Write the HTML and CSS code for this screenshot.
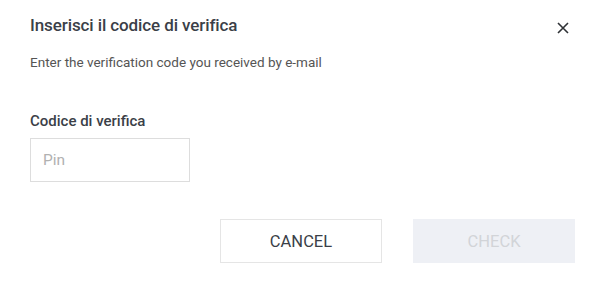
FILE: index.html
```html
<!DOCTYPE html>
<html>
<head>
<meta charset="UTF-8">
<title>Inserisci il codice di verifica</title>
<link rel="stylesheet" href="styles.css">
</head>
<body>
<div class="dialog">
	<div class="dialog_head">
		<h2 class="dialog_title">Inserisci il codice di verifica</h2>
		<a class="dialog_close" href="#">
			<svg width="12" height="12" viewBox="0 0 12 12"><path d="M1 1L11 11M11 1L1 11" stroke="#2f3236" stroke-width="1.6" fill="none"/></svg>
		</a>
	</div>
	<p class="dialog_desc">Enter the verification code you received by e-mail</p>
	<div class="field">
		<label class="field_label" for="pin">Codice di verifica</label>
		<input class="field_input" id="pin" type="text" placeholder="Pin">
	</div>
	<div class="dialog_btns">
		<button class="btn btn_cancel">CANCEL</button>
		<button class="btn btn_check" disabled>CHECK</button>
	</div>
</div>
</body>
</html>
```

FILE: styles.css
```css
*{margin:0;padding:0;outline:0;box-sizing:border-box;}
body{background:#fff;color:#3b3f48;font-family:Roboto,"Liberation Sans",sans-serif;}
.dialog{width:600px;height:290px;padding:10px 25px 0 30px;}
.dialog_head{display:flex;justify-content:space-between;align-items:center;height:30px;}
.dialog_title{font-size:17px;font-weight:500;color:#3b3f48;letter-spacing:-0.1px;}
.dialog_close{display:flex;width:20px;height:20px;align-items:center;justify-content:center;margin-right:2px;margin-top:6px;}
.dialog_desc{margin-top:14px;font-size:13.5px;color:#555;line-height:16px;}
.field{margin-top:42px;}
.field_label{display:block;font-size:15px;font-weight:500;color:#3b3f48;line-height:18px;}
.field_input{display:block;margin-top:8px;width:160px;height:44px;border:1px solid #ddd;padding:0 12px;font-family:inherit;font-size:15.5px;color:#333;}
.field_input::placeholder{color:#b1b1b1;}
.dialog_btns{display:flex;justify-content:flex-end;gap:31px;margin-top:37px;}
.btn{width:162px;height:44px;font-family:inherit;font-size:16.5px;background:#fff;border:1px solid #e5e5e5;color:#3b3f48;cursor:pointer;}
.btn_check{background:#eef0f5;border-color:#eef0f5;color:#d2d4d8;cursor:default;}
```
